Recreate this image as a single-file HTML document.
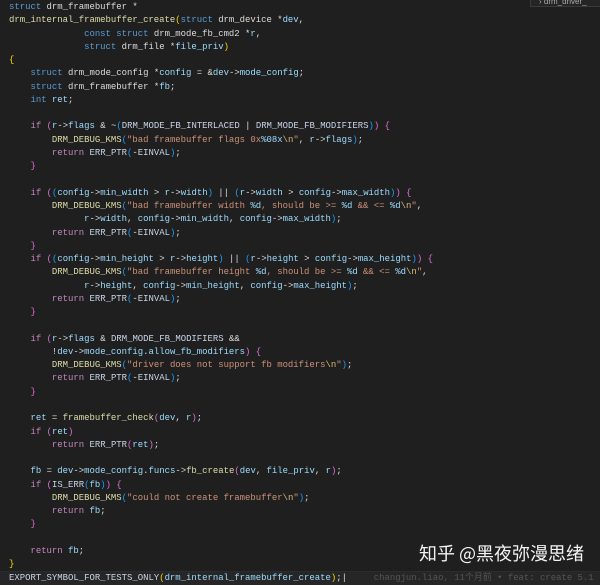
<!DOCTYPE html>
<html><head><meta charset="utf-8"><style>
html,body{margin:0;padding:0;background:#1f1f1f;width:600px;height:585px;overflow:hidden}
pre{margin:0;padding:1px 0 0 9px;font-family:"Liberation Mono",monospace;font-size:8.95px;line-height:13.26px;color:#dcdcdc;white-space:pre}
.k{color:#569cd6}.c{color:#c586c0}.f{color:#dcdcaa}.v{color:#9cdcfe}.m{color:#c8d3e6}.s{color:#ce9178}.e{color:#d7ba7d}
.b1{color:#ffd700}.b2{color:#da70d6}.b3{color:#179fff}
.cur{background:#262626;display:inline-block;width:600px;margin-left:-9px;padding-left:9px;box-sizing:border-box;border-top:1px solid #2c2c2c}
.blame{color:#555}
.wm{position:absolute;left:419px;top:540px;color:#f4f4f4;font:18px "Noto Sans CJK SC",sans-serif;white-space:nowrap}
.tab{position:absolute;left:530px;top:-4px;width:72px;height:11px;background:#252526;border:1px solid #3a3a3a;color:#aaa;font:8px "Liberation Sans",sans-serif;padding-left:8px;box-sizing:border-box;white-space:nowrap;overflow:hidden}
</style></head><body>
<pre><span class="k">struct</span> drm_framebuffer *
<span class="f">drm_internal_framebuffer_create</span><span class="b1">(</span><span class="k">struct</span> drm_device *<span class="v">dev</span>,
              <span class="k">const</span> <span class="k">struct</span> drm_mode_fb_cmd2 *<span class="v">r</span>,
              <span class="k">struct</span> drm_file *<span class="v">file_priv</span><span class="b1">)</span>
<span class="b1">{</span>
    <span class="k">struct</span> drm_mode_config *<span class="v">config</span> = &amp;<span class="v">dev</span>-&gt;<span class="v">mode_config</span>;
    <span class="k">struct</span> drm_framebuffer *<span class="v">fb</span>;
    <span class="k">int</span> <span class="v">ret</span>;

    <span class="c">if</span> <span class="b2">(</span><span class="v">r</span>-&gt;<span class="v">flags</span> &amp; ~<span class="b3">(</span><span class="m">DRM_MODE_FB_INTERLACED</span> | <span class="m">DRM_MODE_FB_MODIFIERS</span><span class="b3">)</span><span class="b2">)</span> <span class="b2">{</span>
        <span class="f">DRM_DEBUG_KMS</span><span class="b3">(</span><span class="s">"bad framebuffer flags 0x</span><span class="v">%08x</span><span class="e">\n</span><span class="s">"</span>, <span class="v">r</span>-&gt;<span class="v">flags</span><span class="b3">)</span>;
        <span class="c">return</span> <span class="m">ERR_PTR</span><span class="b3">(</span>-<span class="m">EINVAL</span><span class="b3">)</span>;
    <span class="b2">}</span>

    <span class="c">if</span> <span class="b2">(</span><span class="b3">(</span><span class="v">config</span>-&gt;<span class="v">min_width</span> &gt; <span class="v">r</span>-&gt;<span class="v">width</span><span class="b3">)</span> || <span class="b3">(</span><span class="v">r</span>-&gt;<span class="v">width</span> &gt; <span class="v">config</span>-&gt;<span class="v">max_width</span><span class="b3">)</span><span class="b2">)</span> <span class="b2">{</span>
        <span class="f">DRM_DEBUG_KMS</span><span class="b3">(</span><span class="s">"bad framebuffer width </span><span class="v">%d</span><span class="s">, should be &gt;= </span><span class="v">%d</span><span class="s"> &amp;&amp; &lt;= </span><span class="v">%d</span><span class="e">\n</span><span class="s">"</span>,
              <span class="v">r</span>-&gt;<span class="v">width</span>, <span class="v">config</span>-&gt;<span class="v">min_width</span>, <span class="v">config</span>-&gt;<span class="v">max_width</span><span class="b3">)</span>;
        <span class="c">return</span> <span class="m">ERR_PTR</span><span class="b3">(</span>-<span class="m">EINVAL</span><span class="b3">)</span>;
    <span class="b2">}</span>
    <span class="c">if</span> <span class="b2">(</span><span class="b3">(</span><span class="v">config</span>-&gt;<span class="v">min_height</span> &gt; <span class="v">r</span>-&gt;<span class="v">height</span><span class="b3">)</span> || <span class="b3">(</span><span class="v">r</span>-&gt;<span class="v">height</span> &gt; <span class="v">config</span>-&gt;<span class="v">max_height</span><span class="b3">)</span><span class="b2">)</span> <span class="b2">{</span>
        <span class="f">DRM_DEBUG_KMS</span><span class="b3">(</span><span class="s">"bad framebuffer height </span><span class="v">%d</span><span class="s">, should be &gt;= </span><span class="v">%d</span><span class="s"> &amp;&amp; &lt;= </span><span class="v">%d</span><span class="e">\n</span><span class="s">"</span>,
              <span class="v">r</span>-&gt;<span class="v">height</span>, <span class="v">config</span>-&gt;<span class="v">min_height</span>, <span class="v">config</span>-&gt;<span class="v">max_height</span><span class="b3">)</span>;
        <span class="c">return</span> <span class="m">ERR_PTR</span><span class="b3">(</span>-<span class="m">EINVAL</span><span class="b3">)</span>;
    <span class="b2">}</span>

    <span class="c">if</span> <span class="b2">(</span><span class="v">r</span>-&gt;<span class="v">flags</span> &amp; <span class="m">DRM_MODE_FB_MODIFIERS</span> &amp;&amp;
        !<span class="v">dev</span>-&gt;<span class="v">mode_config</span>.<span class="v">allow_fb_modifiers</span><span class="b2">)</span> <span class="b2">{</span>
        <span class="f">DRM_DEBUG_KMS</span><span class="b3">(</span><span class="s">"driver does not support fb modifiers</span><span class="e">\n</span><span class="s">"</span><span class="b3">)</span>;
        <span class="c">return</span> <span class="m">ERR_PTR</span><span class="b3">(</span>-<span class="m">EINVAL</span><span class="b3">)</span>;
    <span class="b2">}</span>

    <span class="v">ret</span> = <span class="f">framebuffer_check</span><span class="b2">(</span><span class="v">dev</span>, <span class="v">r</span><span class="b2">)</span>;
    <span class="c">if</span> <span class="b2">(</span><span class="v">ret</span><span class="b2">)</span>
        <span class="c">return</span> <span class="m">ERR_PTR</span><span class="b2">(</span><span class="v">ret</span><span class="b2">)</span>;

    <span class="v">fb</span> = <span class="v">dev</span>-&gt;<span class="v">mode_config</span>.<span class="v">funcs</span>-&gt;<span class="f">fb_create</span><span class="b2">(</span><span class="v">dev</span>, <span class="v">file_priv</span>, <span class="v">r</span><span class="b2">)</span>;
    <span class="c">if</span> <span class="b2">(</span><span class="m">IS_ERR</span><span class="b3">(</span><span class="v">fb</span><span class="b3">)</span><span class="b2">)</span> <span class="b2">{</span>
        <span class="f">DRM_DEBUG_KMS</span><span class="b3">(</span><span class="s">"could not create framebuffer</span><span class="e">\n</span><span class="s">"</span><span class="b3">)</span>;
        <span class="c">return</span> <span class="v">fb</span>;
    <span class="b2">}</span>

    <span class="c">return</span> <span class="v">fb</span>;
<span class="b1">}</span>
<span class="cur"><span class="m">EXPORT_SYMBOL_FOR_TESTS_ONLY</span><span class="b1">(</span><span class="v">drm_internal_framebuffer_create</span><span class="b1">)</span>;|     <span class="blame">changjun.liao, 11个月前 • feat: create 5.1</span></span></pre>
<div class="tab">› drm_driver_</div>
<div class="wm">知乎 @黑夜弥漫思绪</div>
</body></html>
